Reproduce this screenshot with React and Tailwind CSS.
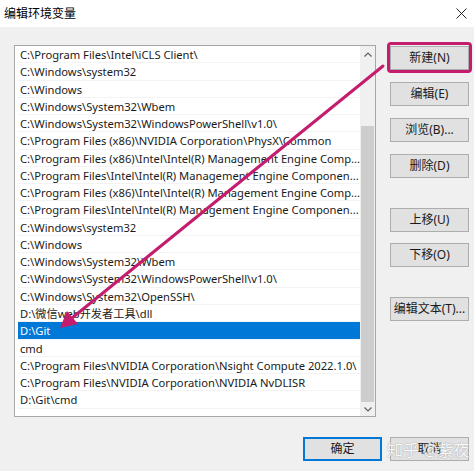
import React from "react";

const paths = [
  "C:\\Program Files\\Intel\\iCLS Client\\",
  "C:\\Windows\\system32",
  "C:\\Windows",
  "C:\\Windows\\System32\\Wbem",
  "C:\\Windows\\System32\\WindowsPowerShell\\v1.0\\",
  "C:\\Program Files (x86)\\NVIDIA Corporation\\PhysX\\Common",
  "C:\\Program Files (x86)\\Intel\\Intel(R) Management Engine Comp...",
  "C:\\Program Files\\Intel\\Intel(R) Management Engine Componen...",
  "C:\\Program Files (x86)\\Intel\\Intel(R) Management Engine Comp...",
  "C:\\Program Files\\Intel\\Intel(R) Management Engine Componen...",
  "C:\\Windows\\system32",
  "C:\\Windows",
  "C:\\Windows\\System32\\Wbem",
  "C:\\Windows\\System32\\WindowsPowerShell\\v1.0\\",
  "C:\\Windows\\System32\\OpenSSH\\",
  "D:\\微信web开发者工具\\dll",
  "D:\\Git",
  "cmd",
  "C:\\Program Files\\NVIDIA Corporation\\Nsight Compute 2022.1.0\\",
  "C:\\Program Files\\NVIDIA Corporation\\NVIDIA NvDLISR",
  "D:\\Git\\cmd",
  "",
];

const SELECTED = 16;

function Btn({ children, className = "" }) {
  return (
    <div
      className={`h-[24px] w-[79px] flex items-center justify-center bg-[#e1e1e1] border border-[#adadad] text-[12px] text-[#1a1a1a] ${className}`}
    >
      {children}
    </div>
  );
}

export default function App() {
  return (
    <div
      className="relative w-[474px] h-[471px] bg-[#f0f0f0] overflow-hidden select-none"
      style={{ fontFamily: '"Noto Sans", "Noto Sans CJK SC", sans-serif' }}
    >
      {/* title bar */}
      <div className="h-[27px] bg-white flex items-center justify-between pl-[4px] pr-[7px]">
        <span className="text-[12px] text-black">编辑环境变量</span>
        <svg width="11" height="11" viewBox="0 0 11 11" className="text-[#222]">
          <path d="M0.5 0.5 L10.5 10.5 M10.5 0.5 L0.5 10.5" stroke="currentColor" strokeWidth="1" />
        </svg>
      </div>

      <div className="flex pl-[14px] pt-[18px]">
        {/* path list */}
        <div className="w-[362px] h-[372px] bg-white border border-[#a6a6a6] flex overflow-hidden">
          <div className="flex-1 pl-[3px] overflow-hidden">
            {paths.map((p, i) => (
              <div
                key={i}
                className={`h-[17.27px] leading-[17px] pl-[2px] text-[11.2px] whitespace-nowrap overflow-hidden border-b border-[#f3f3f3] ${
                  i === SELECTED ? "bg-[#0078d7] text-white" : "text-[#1a1a1a]"
                }`}
              >
                {p}
              </div>
            ))}
          </div>
          {/* vertical scrollbar */}
          <div className="w-[15px] h-full bg-[#f0f0f0] flex flex-col items-center">
            <div className="h-[17px] w-full flex items-center justify-center">
              <svg width="8" height="5" viewBox="0 0 8 5">
                <path d="M0.5 4.5 L4 1 L7.5 4.5" fill="none" stroke="#606060" strokeWidth="1.2" />
              </svg>
            </div>
            <div className="mt-[63px] w-[13px] h-[276px] bg-[#cdcdcd]" />
            <div className="flex-1 w-full flex items-center justify-center">
              <svg width="8" height="5" viewBox="0 0 8 5">
                <path d="M0.5 0.5 L4 4 L7.5 0.5" fill="none" stroke="#606060" strokeWidth="1.2" />
              </svg>
            </div>
          </div>
        </div>

        {/* side buttons */}
        <div className="ml-[14px] pt-[1px] flex flex-col">
          <div className="relative">
            <Btn>新建(N)</Btn>
            <div className="absolute -left-[3px] -top-[4px] w-[85px] h-[31px] rounded-[4px] border-[3px] border-[#c41d6e]" />
          </div>
          <Btn className="mt-[12px]">编辑(E)</Btn>
          <Btn className="mt-[12px]">浏览(B)...</Btn>
          <Btn className="mt-[12px]">删除(D)</Btn>
          <Btn className="mt-[30px]">上移(U)</Btn>
          <Btn className="mt-[11px]">下移(O)</Btn>
          <Btn className="mt-[30px]">编辑文本(T)...</Btn>
        </div>
      </div>

      {/* dialog buttons */}
      <div className="flex justify-end gap-[8px] pr-[5px] pt-[20px]">
        <div className="h-[24px] w-[79px] flex items-center justify-center bg-[#e1e1e1] border-2 border-[#0078d7] text-[12px] text-[#1a1a1a]">
          确定
        </div>
        <div className="relative">
          <Btn>取消</Btn>
          <div
            className="absolute -left-[3px] top-[1px] whitespace-nowrap text-[16px] text-white opacity-80"
            style={{ textShadow: "0 0 1px #999, 0 0 1px #999" }}
          >
            知乎 @紫夜
          </div>
        </div>
      </div>

      {/* pointer arrow */}
      <svg className="absolute inset-0 pointer-events-none" width="474" height="471" viewBox="0 0 474 471">
        <line x1="383" y1="66" x2="72" y2="318" stroke="#c41d6e" strokeWidth="3" strokeLinecap="round" />
        <polygon points="60,328 67,311 78,324" fill="#c41d6e" />
      </svg>
    </div>
  );
}
